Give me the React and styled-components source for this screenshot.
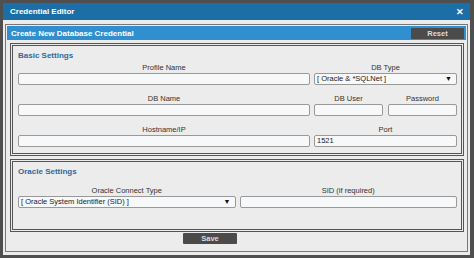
import React from 'react'
import styled, { createGlobalStyle } from 'styled-components'

const Global = createGlobalStyle`
  html, body { margin: 0; padding: 0; background: #4f4f4f; }
  body { font-family: "Liberation Sans", Arial, sans-serif; }
  * { box-sizing: border-box; }
`

const App = () => {
    return (
        <Frame>
            <Global />
            <TitleBar>
                <Title>Credential Editor</Title>
                <Close>✕</Close>
            </TitleBar>
            <Body>
                <Panel>
                    <Header>
                        <HeaderTitle>Create New Database Credential</HeaderTitle>
                        <DarkButton $width="53px">Reset</DarkButton>
                    </Header>
                    <Group $height="113px">
                        <Legend>Basic Settings</Legend>
                        <Grid $cols="292px 1fr">
                            <Field>
                                <Label>Profile Name</Label>
                                <Input />
                            </Field>
                            <Field>
                                <Label>DB Type</Label>
                                <Select>
                                    <span>[ Oracle &amp; *SQLNet ]</span>
                                    <Arrow>▼</Arrow>
                                </Select>
                            </Field>
                            <Field>
                                <Label>DB Name</Label>
                                <Input />
                            </Field>
                            <Grid $cols="1fr 1fr" $gap="5px" $top="0">
                                <Field>
                                    <Label>DB User</Label>
                                    <Input />
                                </Field>
                                <Field>
                                    <Label>Password</Label>
                                    <Input />
                                </Field>
                            </Grid>
                            <Field>
                                <Label>Hostname/IP</Label>
                                <Input />
                            </Field>
                            <Field>
                                <Label>Port</Label>
                                <Input>1521</Input>
                            </Field>
                        </Grid>
                    </Group>
                    <Group $height="73px">
                        <Legend>Oracle Settings</Legend>
                        <Grid $cols="1fr 1fr" $top="9px">
                            <Field>
                                <Label>Oracle Connect Type</Label>
                                <Select>
                                    <span>[ Oracle System Identifier (SID) ]</span>
                                    <Arrow>▼</Arrow>
                                </Select>
                            </Field>
                            <Field>
                                <Label>SID (if required)</Label>
                                <Input />
                            </Field>
                        </Grid>
                    </Group>
                    <Footer>
                        <DarkButton $width="54px">Save</DarkButton>
                    </Footer>
                </Panel>
            </Body>
        </Frame>
    )
}

export default App

const Frame = styled.div`
    width: 474px;
    height: 258px;
    padding: 3px 4px 3px 3px;
    background: #4f4f4f;
    display: flex;
    flex-direction: column;
`
const TitleBar = styled.div`
    height: 17px;
    background: #1c6ea6;
    display: flex;
    align-items: center;
    justify-content: space-between;
    padding: 0 6px 0 7px;
`
const Title = styled.span`
    color: #fff;
    font-size: 8px;
    font-weight: bold;
`
const Close = styled.span`
    color: #fff;
    font-size: 9px;
    font-weight: bold;
`
const Body = styled.div`
    flex: 1;
    background: #ececec;
    padding: 4px 2px 3px 2px;
    display: flex;
`
const Panel = styled.div`
    flex: 1;
    border: 1px solid #777;
    padding: 1px 3px 0 1px;
    display: flex;
    flex-direction: column;
`
const Header = styled.div`
    height: 14px;
    margin-right: -2px;
    background: #2f8fcf;
    display: flex;
    align-items: center;
    justify-content: space-between;
    padding: 0 2px 0 4px;
`
const HeaderTitle = styled.span`
    color: #fff;
    font-size: 8px;
    font-weight: bold;
`
const DarkButton = styled.div`
    width: ${p => p.$width};
    height: 11px;
    background: #4b4b4b;
    border-radius: 1px;
    color: #dcdcdc;
    font-size: 7.5px;
    font-weight: bold;
    display: flex;
    align-items: center;
    justify-content: center;
`
const Group = styled.div`
    height: ${p => p.$height};
    margin: 3px 0 0 3px;
    border: 3px double #555;
    padding: 5px 4px 0 5px;
`
const Legend = styled.div`
    color: #2d6a9c;
    font-size: 8px;
    font-weight: bold;
    height: 10px;
    line-height: 10px;
`
const Grid = styled.div`
    display: grid;
    grid-template-columns: ${p => p.$cols};
    column-gap: ${p => p.$gap || '4px'};
    row-gap: 9px;
    margin-top: ${p => p.$top || '2px'};
`
const Field = styled.div`
    display: flex;
    flex-direction: column;
`
const Label = styled.div`
    text-align: center;
    color: #333;
    font-size: 7.5px;
    height: 10px;
    line-height: 10px;
`
const Input = styled.div`
    height: 12px;
    background: #f7f8f9;
    border: 1px solid #999;
    border-radius: 2px;
    font-size: 7.5px;
    color: #222;
    line-height: 10px;
    padding: 0 2px;
`
const Select = styled(Input)`
    display: flex;
    justify-content: space-between;
    align-items: center;
    padding: 0 4px 0 2px;
`
const Arrow = styled.span`
    font-size: 7px;
    color: #111;
`
const Footer = styled.div`
    display: flex;
    padding-top: 1px;
    padding-left: 176px;
`
